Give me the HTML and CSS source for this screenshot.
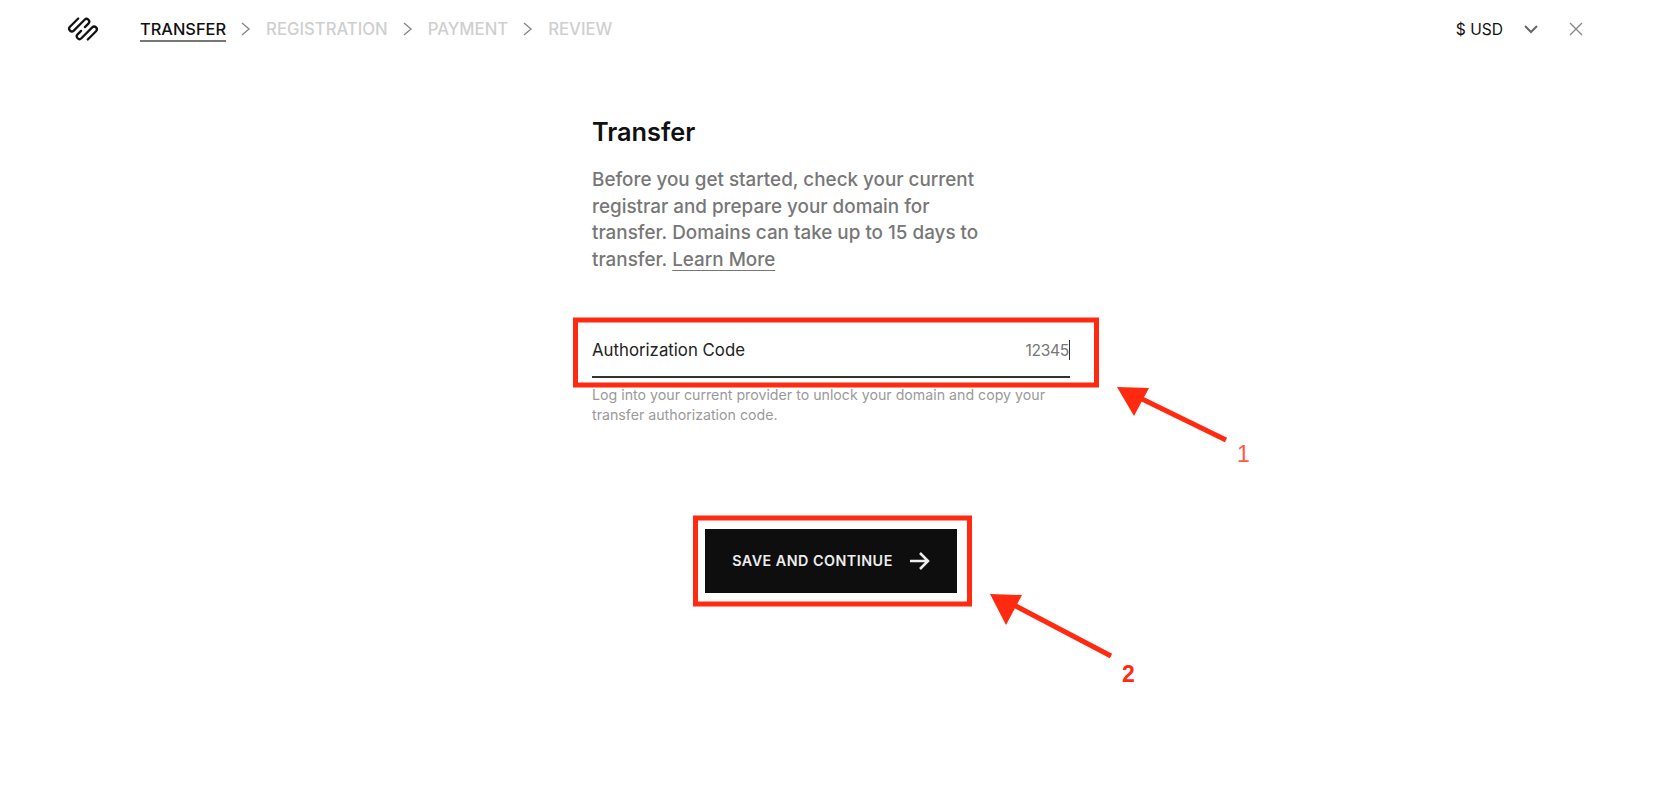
FILE: index.html
```html
<!DOCTYPE html>
<html lang="en">
<head>
    <meta charset="UTF-8">
    <meta name="viewport" content="width=device-width, initial-scale=1.0">
    <title>Transfer</title>
    <link rel="stylesheet" href="styles.css">
</head>
<body>

<header class="topbar">
    <svg class="logo" width="36" height="36" viewBox="-8.5 -8 40 40" fill="none" stroke="#111" stroke-width="2.5" stroke-linecap="round">
        <g transform="rotate(-45 11.5 12)">
            <path d="M16 0H3a3 3 0 0 0 0 6H20a3 3 0 0 1 0 6H14.5"/>
            <path d="M7 24H20a3 3 0 0 0 0-6H3a3 3 0 0 1 0-6H8.5"/>
        </g>
    </svg>
    <nav class="steps">
        <span class="step active">Transfer</span>
        <svg class="chevron" width="12" height="16" viewBox="0 0 12 16"><path d="M2 2l7 6-7 6"/></svg>
        <span class="step">Registration</span>
        <svg class="chevron" width="12" height="16" viewBox="0 0 12 16"><path d="M2 2l7 6-7 6"/></svg>
        <span class="step">Payment</span>
        <svg class="chevron" width="12" height="16" viewBox="0 0 12 16"><path d="M2 2l7 6-7 6"/></svg>
        <span class="step">Review</span>
    </nav>
    <div class="topbar-right">
        <span class="currency">$ USD</span>
        <svg class="icon icon-bold" width="16" height="10" viewBox="0 0 16 10"><path d="M2 2l6 6 6-6"/></svg>
        <svg class="icon close" width="16" height="16" viewBox="0 0 16 16"><path d="M2 2l12 12M14 2L2 14"/></svg>
    </div>
</header>

<main class="content">
    <h1>Transfer</h1>
    <p class="intro">Before you get started, check your current registrar and prepare your domain for transfer. Domains can take up to 15 days to transfer. <a href="#">Learn More</a></p>

    <div class="field">
        <label for="authCode">Authorization Code</label>
        <span class="field-value" id="authCode">12345</span>
    </div>
    <p class="help">Log into your current provider to unlock your domain and copy your transfer authorization code.</p>

    <div class="actions">
        <button type="button">
            <span class="button-label">Save and Continue</span>
            <svg width="22" height="20" viewBox="0 0 22 20"><path d="M2 10H20M12 2l8 8-8 8"/></svg>
        </button>
    </div>
</main>

<svg class="annotations" width="1672" height="810" viewBox="0 0 1672 810">
    <rect class="box" x="575.5" y="320" width="521" height="65"/>
    <rect class="box" x="695.5" y="518" width="274" height="86"/>
    <path class="arrow-line" d="M1226 440L1140 398"/>
    <polygon class="arrow-head" points="1117,387 1149,388 1134,416"/>
    <path class="arrow-line" d="M1111 656L1012 604"/>
    <polygon class="arrow-head" points="990,594 1022,595 1006,625"/>
    <text class="num" x="1237" y="462">1</text>
    <text class="num num-bold" x="1122" y="682">2</text>
</svg>

</body>
</html>
```

FILE: styles.css
```css
body {
    font-family: Inter, "Liberation Sans", sans-serif;
    background-color: #fff;
    color: #111;
    margin: 0;
    height: 810px;
    position: relative;
    overflow: hidden;
}

.topbar {
    display: flex;
    align-items: center;
    height: 58px;
    padding: 0 88px 0 65px;
}

.logo {
    margin-right: 39px;
}

.steps {
    display: flex;
    align-items: center;
    gap: 14px;
}

.step {
    font-size: 16.7px;
    font-weight: 500;
    text-transform: uppercase;
    color: #cfcfcf;
    padding: 2px 0 1px;
    border-bottom: 2px solid transparent;
}

.step.active {
    font-size: 16.4px;
    color: #111;
    border-bottom-color: #777;
}

.chevron path,
.icon path {
    fill: none;
    stroke: #888;
    stroke-width: 1.4;
}

.icon-bold path {
    stroke: #666;
    stroke-width: 2;
}

.topbar-right {
    display: flex;
    align-items: center;
    margin-left: auto;
}

.currency {
    font-size: 15.6px;
    margin-right: 20px;
}

.close {
    margin-left: 29px;
}

.content {
    width: 478px;
    margin-left: 592px;
}

h1 {
    font-size: 25.3px;
    font-weight: 600;
    line-height: 30px;
    margin: 59px 0 20px;
}

.intro {
    width: 395px;
    font-size: 18.85px;
    font-weight: 500;
    line-height: 26.5px;
    color: #777;
    margin: 0 0 46px;
}

.intro a {
    color: #777;
    text-decoration: underline;
    text-decoration-thickness: 1px;
    text-underline-offset: 4px;
}

.field {
    display: flex;
    justify-content: space-between;
    align-items: center;
    height: 53px;
    padding-top: 4px;
    border-bottom: 2px solid #333;
    font-size: 16.8px;
    color: #222;
}

.field-value {
    color: #777;
    font-size: 15.6px;
    letter-spacing: -0.3px;
    padding-top: 1px;
    border-right: 1px solid #333;
}

.help {
    font-size: 14.2px;
    line-height: 19.5px;
    color: #9a9a9a;
    margin: 7px 0 0;
}

.actions {
    display: flex;
    justify-content: center;
    margin-top: 105px;
}

button {
    display: flex;
    align-items: center;
    justify-content: center;
    gap: 15px;
    width: 252px;
    height: 64px;
    background-color: #0e0e0e;
    color: #eee;
    border: none;
    font-family: inherit;
    font-size: 14.3px;
    font-weight: 600;
    letter-spacing: 0.5px;
    text-transform: uppercase;
}

.button-label {
    padding-bottom: 2px;
}

button path {
    fill: none;
    stroke: #eee;
    stroke-width: 2.5;
}

.annotations {
    position: absolute;
    top: 0;
    left: 0;
}

.box {
    fill: none;
    stroke: #ff2a0f;
    stroke-width: 5;
}

.arrow-line {
    fill: none;
    stroke: #ff2a0f;
    stroke-width: 5;
}

.arrow-head {
    fill: #ff2a0f;
}

.num {
    font-family: "Liberation Sans", sans-serif;
    font-size: 23px;
    fill: #ff5a45;
}

.num-bold {
    font-weight: 700;
    fill: #ff2a0f;
}
```
